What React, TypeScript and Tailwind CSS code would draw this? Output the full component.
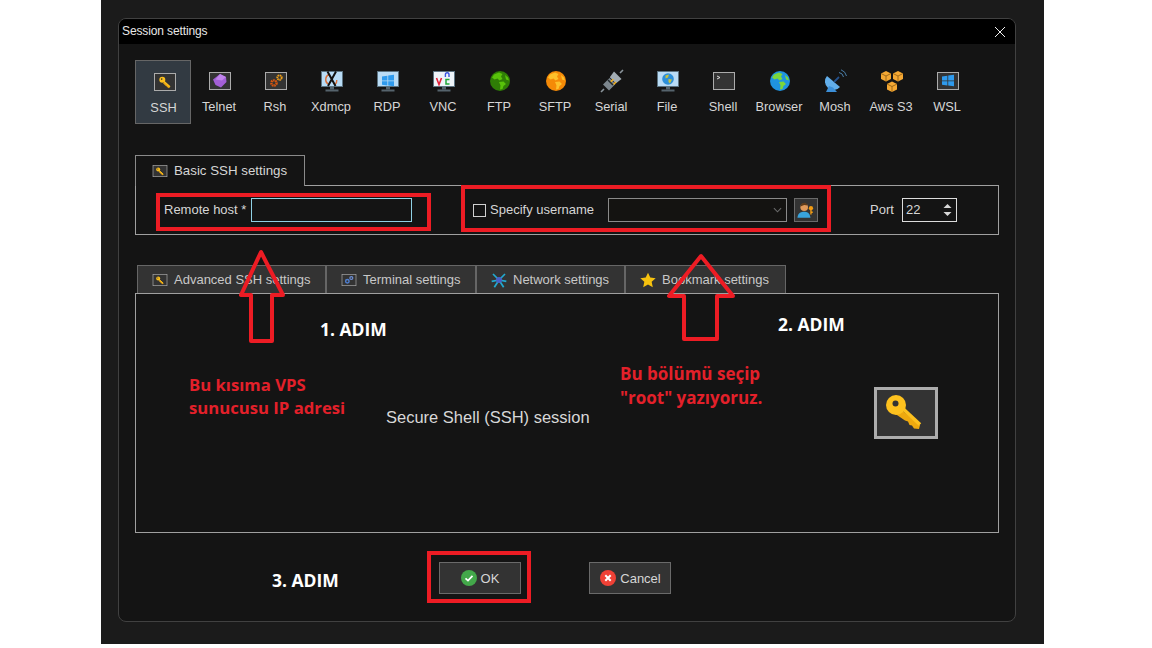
import React from "react";

const Frame = ({ children, bg = "#333333" }: { children?: React.ReactNode; bg?: string }) => (
  <>
    <rect x="1.5" y="3.5" width="21" height="17" fill={bg} stroke="#ababab" />
    {children}
  </>
);

const KeyShape = () => (
  <g>
    <path d="M11.5 12 L17 17 L16 18.2 L14.6 17.6 L13.8 16.6 L12.6 15.8 L10 13.2 Z" fill="#e8a512" />
    <circle cx="9.3" cy="9.8" r="3" fill="#fbbf1c" />
    <circle cx="8.7" cy="9.1" r="0.8" fill="#333333" />
    <path d="M10.5 11 L17 16.8" stroke="#fbbf1c" strokeWidth="1.5" />
  </g>
);

const Monitor = ({ children }: { children?: React.ReactNode }) => (
  <>
    <rect x="1.5" y="2.5" width="21" height="15" fill="#b9dcf6" stroke="#5d7482" />
    <rect x="10" y="18" width="4" height="2.5" fill="#55636c" />
    <rect x="5.5" y="20.5" width="13" height="2" fill="#55636c" />
    {children}
  </>
);

const WinLogo = ({ c = "#2f9bee" }: { c?: string }) => (
  <path d="M6 7.6 L11.4 6.8 V11.4 H6 Z M12.2 6.6 L18 5.8 V11.4 H12.2 Z M6 12.2 H11.4 V16.4 L6 15.7 Z M12.2 12.2 H18 V17.2 L12.2 16.5 Z" fill={c} />
);

const Globe = ({ sea, land }: { sea: string; land: string }) => (
  <>
    <circle cx="12" cy="12" r="10" fill={sea} />
    <path d="M6 5.5 L11 3.5 L14.5 5 L13 7.5 L14.5 10 L11.5 11.5 L9.5 9.5 L6.5 10.5 L4 8.5 Z M11 13 L15.5 12.5 L18 15 L15.5 17 L14.5 20 L12 20.5 L12.5 16.5 Z M17 6 L20 8.5 L21 11.5 L18 10.5 Z" fill={land} />
  </>
);

const Cube = ({ x, y }: { x: number; y: number }) => (
  <g transform={`translate(${x} ${y})`}>
    <path d="M5 0 L10 2.5 V8 L5 10.5 L0 8 V2.5 Z" fill="#f5a833" />
    <path d="M0 2.5 L5 5 L10 2.5 M5 5 V10.5" fill="none" stroke="#8a5a12" strokeWidth="0.8" />
  </g>
);

const icons: Record<string, React.ReactNode> = {
  SSH: <Frame><KeyShape /></Frame>,
  Telnet: (
    <Frame>
      <path d="M12 5 L18 8 L18.5 13 L13 18.5 L7.5 16 L5 10.5 Z" fill="#a35fd6" />
      <path d="M12 5 L18 8 L14 11.5 L7.5 10.5 Z" fill="#c084ec" />
    </Frame>
  ),
  Rsh: (
    <Frame>
      <circle cx="10" cy="14" r="2.6" fill="none" stroke="#d9560f" strokeWidth="2.4" strokeDasharray="1.6 0.6" />
      <circle cx="15.5" cy="8.6" r="2.2" fill="none" stroke="#f0a018" strokeWidth="1.9" strokeDasharray="1.4 0.5" />
    </Frame>
  ),
  Xdmcp: (
    <Monitor>
      <path d="M8 15 A5.5 5.5 0 0 1 9 5.5" fill="none" stroke="#d9703a" strokeWidth="1.4" />
      <path d="M15 15.5 A5.5 5.5 0 0 0 16.8 11" fill="none" stroke="#d9703a" strokeWidth="1.4" />
      <path d="M7.5 2.5 L15.5 17 M16 2.5 L8 17" stroke="#111111" strokeWidth="2" />
    </Monitor>
  ),
  RDP: <Monitor><WinLogo /></Monitor>,
  VNC: (
    <Monitor>
      <rect x="2" y="3" width="20" height="14" fill="#eef4f9" />
      <path d="M4.5 9 L7 15.5 L9.5 9" fill="none" stroke="#e3213a" strokeWidth="1.6" />
      <path d="M13.4 8 V5.5 A1.8 1.8 0 0 1 17 5.5 V8" fill="none" stroke="#3b55e0" strokeWidth="1.4" />
      <path d="M17.5 10.5 H14 V15 H17.5" fill="none" stroke="#22a63a" strokeWidth="1.5" />
    </Monitor>
  ),
  FTP: <Globe sea="#2f7d06" land="#58c20a" />,
  SFTP: <Globe sea="#f58a07" land="#fdc02a" />,
  Serial: (
    <>
      <path d="M1 23 L4 20 M23 1 L20 4" stroke="#8a949b" strokeWidth="1.6" />
      <path d="M9.5 9 L15.5 15 L9 21.5 L3 15.5 Z" fill="#7c868d" />
      <path d="M14 2.5 L21.5 10 L15.8 14.5 L9.8 8.3 Z" fill="#a2acb3" />
      <path d="M10.5 13 L13.3 10.2 M13.5 15.5 L16 13" stroke="#f7b21a" strokeWidth="1.5" />
      <path d="M8 11 L13 16" stroke="#22282c" strokeWidth="1.5" />
    </>
  ),
  File: (
    <Monitor>
      <circle cx="12" cy="10" r="5.8" fill="#2d8fd9" />
      <path d="M9.5 6.5 L13 5.5 L12 8.5 L9.5 9.5 Z M12.5 10 L16 10.5 L14 14.5 L12.5 13 Z" fill="#c9c23a" />
    </Monitor>
  ),
  Shell: (
    <Frame>
      <path d="M5 7 L8 8.5 L5 10" fill="none" stroke="#d8d8d8" strokeWidth="1" />
    </Frame>
  ),
  Browser: <Globe sea="#1f93e0" land="#7bd63c" />,
  Mosh: (
    <>
      <path d="M3 7 L16 18 A8.5 8.5 0 0 1 3 7 Z" fill="#62aeea" />
      <path d="M5 17 L2 23 H13 L9 18.5 Z" fill="#3c8fd8" />
      <path d="M10 13 L15 8" stroke="#24508a" strokeWidth="1.8" />
      <path d="M15 3.5 A5.5 5.5 0 0 1 19.5 8 M17 0.8 A8.5 8.5 0 0 1 22.5 7" fill="none" stroke="#4b7fa8" strokeWidth="1" />
    </>
  ),
  "Aws S3": (
    <>
      <Cube x={1} y={2} />
      <Cube x={13} y={2} />
      <Cube x={7} y={12.5} />
    </>
  ),
  WSL: <Frame><WinLogo /></Frame>,
};

const names = ["SSH", "Telnet", "Rsh", "Xdmcp", "RDP", "VNC", "FTP", "SFTP", "Serial", "File", "Shell", "Browser", "Mosh", "Aws S3", "WSL"];

const SmallIcon = ({ name }: { name: string }) => (
  <svg viewBox="0 0 24 24" className="w-[16px] h-[16px] shrink-0">
    {name === "key" && <Frame><KeyShape /></Frame>}
    {name === "term" && (
      <Frame>
        <circle cx="9.5" cy="14" r="2.6" fill="none" stroke="#4f7fd0" strokeWidth="2.2" />
        <circle cx="15.5" cy="9" r="2.2" fill="none" stroke="#6c8fd8" strokeWidth="1.8" />
      </Frame>
    )}
    {name === "net" && (
      <>
        <path d="M12 12 L3 3 M12 12 L21 3 M12 12 L1 14 M12 12 L23 14 M12 12 L5 23 M12 12 L19 23" stroke="#22a9cf" strokeWidth="2.6" />
        <circle cx="12" cy="12" r="4.5" fill="#4a5fc8" />
      </>
    )}
    {name === "star" && (
      <path d="M12 1 L15.4 8.4 L23.5 9.3 L17.5 14.8 L19.2 22.8 L12 18.8 L4.8 22.8 L6.5 14.8 L0.5 9.3 L8.6 8.4 Z" fill="#f6c20f" />
    )}
  </svg>
);

const tabs = [
  { label: "Advanced SSH settings", icon: "key", w: "w-[189px]" },
  { label: "Terminal settings", icon: "term", w: "w-[150px]" },
  { label: "Network settings", icon: "net", w: "w-[149px]" },
  { label: "Bookmark settings", icon: "star", w: "w-[161px]" },
];

export default function App() {
  return (
    <div
      className="relative w-[1152px] h-[648px] bg-white overflow-hidden text-[13px] text-[#d6d6d6]"
      style={{ fontFamily: '"Liberation Sans", Arial, sans-serif' }}
    >
      <div className="ml-[101px] w-[943px] h-[644px] bg-[#1b1b1b] pt-[18px] pl-[17px]">
        <div className="w-[898px] h-[604px] bg-[#141414] border border-[#414141] rounded-lg overflow-hidden">
          {/* Title bar */}
          <div className="h-[25px] bg-black flex items-center justify-between pl-[3px] pr-[10px] text-[12px] text-[#e8e8e8]">
            <span className="-mt-[1px] tracking-[-0.01em]">Session settings</span>
            <svg viewBox="0 0 10 10" className="w-[10px] h-[10px]">
              <path d="M0 0 L10 10 M10 0 L0 10" stroke="#f0f0f0" strokeWidth="1" />
            </svg>
          </div>

          <div className="pl-[16px] pr-[16px]">
            {/* Session type toolbar */}
            <div className="flex mt-[16px] h-[64px] text-[12.8px]">
              {names.map((n) => (
                <div
                  key={n}
                  className={
                    n === "SSH"
                      ? "w-[56px] h-[64px] flex flex-col items-center pt-[10px] pl-[1px] bg-[#323a42] border border-[#666666]"
                      : "w-[56px] h-[64px] flex flex-col items-center pt-[9px]"
                  }
                >
                  <svg viewBox="0 0 24 24" className={n === "SSH" ? "w-[24px] h-[24px] -mt-px ml-[2px] shrink-0" : "w-[24px] h-[24px] ml-[2px] shrink-0"}>
                    {icons[n]}
                  </svg>
                  <span className="mt-[6px] leading-[16px] whitespace-nowrap">{n}</span>
                </div>
              ))}
            </div>

            {/* Basic SSH settings */}
            <div className="mt-[31px] relative z-10 -mb-px w-[170px] h-[31px] bg-[#141414] border border-b-0 border-[#8a8a8a] flex items-center gap-[6px] pl-[16px] text-[13.3px]">
              <SmallIcon name="key" />
              <span>Basic SSH settings</span>
            </div>
            <div className="w-[864px] h-[50px] border border-[#a0a0a0] flex items-center pl-[28px]">
              <span className="w-[87px] whitespace-nowrap">Remote host *</span>
              <div className="w-[161px] h-[24px] border border-[#8fd0e4]" />
              <div className="ml-[61px] w-[13px] h-[13px] border border-[#d0d0d0]" />
              <span className="ml-[4px] w-[118px] whitespace-nowrap">Specify username</span>
              <div className="w-[179px] h-[24px] border border-[#8a8a8a] bg-[#141311] flex items-center justify-end pr-[4px]">
                <svg viewBox="0 0 10 6" className="w-[9px] h-[6px]">
                  <path d="M1 1 L5 5 L9 1" fill="none" stroke="#6a6a6a" strokeWidth="1.2" />
                </svg>
              </div>
              <div className="ml-[7px] w-[24px] h-[24px] border border-[#6a6a6a] bg-[#333333] flex items-center justify-center">
                <svg viewBox="0 0 20 20" className="w-[18px] h-[18px]">
                  <path d="M0.5 18.5 C1 13 5 12 8 12 C11 12 14 13 15 18.5 Z" fill="#38a3dc" />
                  <circle cx="8" cy="7" r="4.2" fill="#e0995a" />
                  <path d="M3.8 6 A4.2 4.2 0 0 1 12 5 L8 4.5 Z" fill="#5c3a1a" />
                  <circle cx="15.5" cy="8" r="2.4" fill="#f39c12" />
                  <path d="M15.5 9 V15 M15.5 12.5 H17.5" stroke="#f39c12" strokeWidth="1.5" />
                </svg>
              </div>
              <span className="ml-[52px] w-[32px]">Port</span>
              <div className="w-[55px] h-[24px] border border-[#dddddd] flex items-center justify-between pl-[3px] pr-[4px]">
                <span>22</span>
                <svg viewBox="0 0 9 16" className="w-[9px] h-[16px]">
                  <path d="M0.5 6 L4.5 2 L8.5 6 Z M0.5 10 L4.5 14 L8.5 10 Z" fill="#d8d8d8" />
                </svg>
              </div>
            </div>

            {/* Secondary tabs */}
            <div className="flex mt-[30px] ml-[2px] h-[28px]">
              {tabs.map((t) => (
                <div
                  key={t.label}
                  className={`${t.w} h-[29px] bg-[#333333] border border-[#666666] flex items-center gap-[6px] pl-[14px] whitespace-nowrap`}
                >
                  <SmallIcon name={t.icon} />
                  <span className="text-[#c8c8c8] mt-[1px]">{t.label}</span>
                </div>
              ))}
            </div>
            <div className="relative w-[864px] h-[240px] border border-[#a0a0a0] bg-[#141414] flex items-center pl-[250px]">
              <span className="text-[16.5px] mt-[8px] text-[#d8d8d8] w-[488px]">Secure Shell (SSH) session</span>
              <div className="w-[64px] h-[52px] bg-[#333333] border-[3px] border-[#adadad] flex items-center justify-center">
                <svg viewBox="0 0 48 40" className="w-[48px] h-[40px]">
                  <path d="M16 14 L38 32 L37 36 L32 35.5 L30 32.5 L27.5 32 L26 28.5 L23 27.5 L12 20 Z" fill="#eea90f" />
                  <path d="M17 12 L38 31.5" stroke="#fdc11e" strokeWidth="3.5" />
                  <circle cx="14" cy="12" r="10" fill="#fdc11e" />
                  <circle cx="13.5" cy="10.5" r="3" fill="#333333" />
                </svg>
              </div>
            </div>

            {/* Footer buttons */}
            <div className="flex mt-[29px] ml-[304px] gap-[68px]">
              <div className="w-[82px] h-[32px] bg-[#333333] border border-[#6a6a6a] flex items-center justify-center gap-[4px]">
                <svg viewBox="0 0 16 16" className="w-[16px] h-[16px]">
                  <circle cx="8" cy="8" r="8" fill="#43a84a" />
                  <path d="M4.5 8.3 L7 10.6 L11.5 5.8" fill="none" stroke="#ffffff" strokeWidth="1.7" />
                </svg>
                <span className="mt-[1px]">OK</span>
              </div>
              <div className="w-[82px] h-[32px] bg-[#333333] border border-[#6a6a6a] flex items-center justify-center gap-[4px] pl-[1px]">
                <svg viewBox="0 0 16 16" className="w-[16px] h-[16px]">
                  <circle cx="8" cy="8" r="8" fill="#ef4136" />
                  <path d="M5.3 5.3 L10.7 10.7 M10.7 5.3 L5.3 10.7" stroke="#ffffff" strokeWidth="2" />
                </svg>
                <span className="mt-[1px]">Cancel</span>
              </div>
            </div>
          </div>
        </div>
      </div>

      {/* Red annotations drawn over the screenshot */}
      <div className="absolute left-[156px] top-[193px] w-[275px] h-[38px] border-[4px] border-[#ed1c24]" />
      <div className="absolute left-[461px] top-[185px] w-[370px] h-[47px] border-[4px] border-[#ed1c24]" />
      <div className="absolute left-[427px] top-[551px] w-[104px] h-[52px] border-[4px] border-[#ed1c24]" />

      <svg className="absolute left-[230px] top-[245px] w-[65px] h-[105px]" viewBox="0 0 65 105">
        <path d="M31 7 L11 50 H21 V96 H42 V50 L53 50 Z" fill="none" stroke="#ed1c24" strokeWidth="4" strokeLinejoin="round" />
      </svg>
      <svg className="absolute left-[660px] top-[250px] w-[85px] h-[100px]" viewBox="0 0 85 100">
        <path d="M41 6 L9 46 H24 V89 H57 V46 H73 Z" fill="none" stroke="#ed1c24" strokeWidth="4" strokeLinejoin="round" />
      </svg>

      <div className="absolute left-[320px] top-[317px] text-[17.5px] leading-[24px] font-bold text-white whitespace-nowrap" style={{ fontFamily: '"Open Sans", sans-serif' }}>1. ADIM</div>
      <div className="absolute left-[778px] top-[312px] text-[17.5px] leading-[24px] font-bold text-white whitespace-nowrap" style={{ fontFamily: '"Open Sans", sans-serif' }}>2. ADIM</div>
      <div className="absolute left-[272px] top-[568px] text-[17.5px] leading-[24px] font-bold text-white whitespace-nowrap" style={{ fontFamily: '"Open Sans", sans-serif' }}>3. ADIM</div>
      <div className="absolute left-[189px] top-[373px] text-[16.7px] leading-[23px] font-bold text-[#e3202a] whitespace-nowrap" style={{ fontFamily: '"Open Sans", sans-serif' }}>
        Bu kısıma VPS
        <br />
        sunucusu IP adresi
      </div>
      <div className="absolute left-[620px] top-[362px] text-[17px] leading-[24px] font-bold text-[#e3202a] whitespace-nowrap" style={{ fontFamily: '"Open Sans", sans-serif' }}>
        Bu bölümü seçip
        <br />
        "root" yazıyoruz.
      </div>
    </div>
  );
}
